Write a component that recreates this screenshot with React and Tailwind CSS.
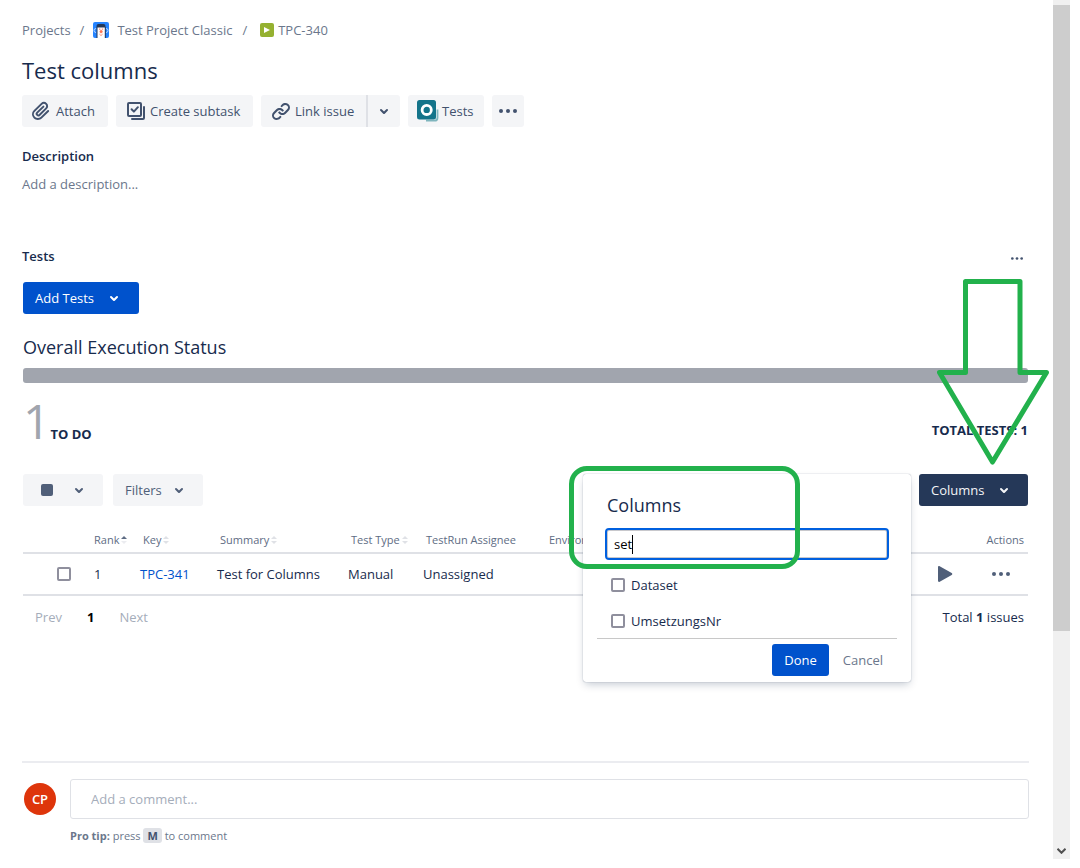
import React, { useState } from 'react';

function Chevron({ className = '' }) {
  return (
    <svg viewBox="0 0 24 24" className={`h-6 w-6 shrink-0 ${className}`} fill="currentColor" aria-hidden="true">
      <path d="M8.292 10.293a1.009 1.009 0 000 1.419l2.939 2.965c.218.215.5.322.779.322s.556-.107.769-.322l2.93-2.955a1.01 1.01 0 000-1.419.987.987 0 00-1.406 0l-2.298 2.317-2.307-2.327a.99.99 0 00-1.406 0z" />
    </svg>
  );
}

function AttachIcon() {
  return (
    <svg viewBox="0 0 24 24" className="h-6 w-6 shrink-0" fill="currentColor" aria-hidden="true">
      <path d="M11.643 17.965c-1.53 1.495-4.016 1.496-5.542.004a3.773 3.773 0 01.002-5.412l7.147-6.985a2.316 2.316 0 013.233-.003c.893.873.895 2.282.004 3.153l-6.703 6.55a.653.653 0 01-.914-.008.62.62 0 010-.902l6.229-6.087a.941.941 0 000-1.353.995.995 0 00-1.384 0l-6.23 6.087a2.502 2.502 0 000 3.607 2.643 2.643 0 003.683.009l6.703-6.55a4.074 4.074 0 00-.003-5.859 4.306 4.306 0 00-6.002.003l-7.148 6.985a5.655 5.655 0 00-.001 8.118c2.29 2.237 6.015 2.238 8.304.001l6.84-6.684a.942.942 0 000-1.353.995.995 0 00-1.384 0l-6.834 6.68z" />
    </svg>
  );
}

function SubtaskIcon() {
  return (
    <svg viewBox="0 0 24 24" className="h-6 w-6 shrink-0" fill="none" stroke="currentColor" strokeWidth="2" strokeLinecap="round" strokeLinejoin="round" aria-hidden="true">
      <rect x="4" y="4" width="13" height="13" rx="1" />
      <path d="M7.6 10.2l2.3 2.4 4-4.4" />
      <path d="M8 20h11a1 1 0 001-1V8" />
    </svg>
  );
}

function LinkIcon() {
  return (
    <svg viewBox="0 0 24 24" className="h-6 w-6 shrink-0" fill="currentColor" aria-hidden="true">
      <path d="M12.856 5.457l-.937.92a1.002 1.002 0 000 1.437 1.047 1.047 0 001.463 0l.984-.966c.967-.95 2.542-1.135 3.602-.288a2.54 2.54 0 01.203 3.81l-2.903 2.852a2.646 2.646 0 01-3.696 0l-1.11-1.09L9 13.57l1.108 1.089c1.822 1.788 4.802 1.788 6.622 0l2.905-2.852a4.558 4.558 0 00-.357-6.82c-1.893-1.517-4.695-1.226-6.422.47" />
      <path d="M11.144 19.543l.937-.92a1.002 1.002 0 000-1.437 1.047 1.047 0 00-1.462 0l-.985.966c-.967.95-2.542 1.135-3.602.288a2.54 2.54 0 01-.203-3.81l2.903-2.852a2.646 2.646 0 013.696 0l1.11 1.09L15 11.43l-1.108-1.089c-1.822-1.788-4.802-1.788-6.622 0l-2.905 2.852a4.558 4.558 0 00.357 6.82c1.893 1.517 4.695 1.226 6.422-.47" />
    </svg>
  );
}

function TestsIcon() {
  return (
    <svg viewBox="0 0 22 22" className="h-[22px] w-[22px] shrink-0" aria-hidden="true">
      <path d="M9 20.7h8.500a3 3 0 003-3V9.500" fill="none" stroke="#7fb5bd" strokeWidth="1.800" />
      <rect width="19" height="19.500" rx="2.500" fill="#14748a" />
      <circle cx="9.700" cy="9.900" r="4.600" fill="none" stroke="#fff" strokeWidth="2.800" />
    </svg>
  );
}

function ProjectAvatar() {
  return (
    <svg viewBox="0 0 16 16" className="h-4 w-4 shrink-0" aria-hidden="true">
      <rect width="16" height="16" rx="2" fill="#2684ff" />
      <path d="M3 6.500a2 2 0 000 4M13 6.500a2 2 0 010 4" fill="none" stroke="#b3d4ff" strokeWidth="1" />
      <path d="M4 5h8v11H4z" fill="#fff" />
      <path d="M3.500 5.500V4a2 2 0 012-2h5a2 2 0 012 2v1.500z" fill="#253858" />
      <path d="M4 5v11M12.300 5v11" stroke="#253858" strokeWidth="1" />
      <path d="M6 7.200h1.500M8.700 7.200h1.500" stroke="#ff8f73" strokeWidth="1.200" />
      <circle cx="8.100" cy="9.500" r="1.500" fill="#ff7452" />
      <path d="M6 12.200h4M7 13.500h2" stroke="#ffbdad" strokeWidth="1" />
    </svg>
  );
}

function Dots({ className = '' }) {
  return (
    <svg viewBox="0 0 18 4" className={className} fill="currentColor" aria-hidden="true">
      <circle cx="2" cy="2" r="2" />
      <circle cx="9" cy="2" r="2" />
      <circle cx="16" cy="2" r="2" />
    </svg>
  );
}

function SortArrows({ ascending = false }) {
  return (
    <svg viewBox="0 0 6 8" className="h-2 w-[6px] shrink-0" aria-hidden="true">
      <path d="M0 3L3 0l3 3z" fill={ascending ? '#5e6c84' : '#dfe1e6'} />
      <path d="M0 5h6L3 8z" fill={ascending ? '#ebecf0' : '#dfe1e6'} />
    </svg>
  );
}

function Checkbox({ label, showLabel = true }) {
  return (
    <label className="flex items-center gap-[6px] text-[13px] leading-5">
      <input
        type="checkbox"
        aria-label={label}
        className="h-[14px] w-[14px] shrink-0 appearance-none rounded-[2px] border-2 border-[#8f8f9d] bg-white checked:bg-[#0052cc]"
      />
      {showLabel && <span>{label}</span>}
    </label>
  );
}

function Heading({ children, sortable, ascending }) {
  return (
    <th className="whitespace-nowrap border-b-2 border-[#dfe1e6] pb-1 pl-[7px] pt-[26px] text-left font-medium">
      <span className="flex items-center gap-[2px] leading-4">
        {children}
        {sortable && <SortArrows ascending={ascending} />}
      </span>
    </th>
  );
}

const toolButton = 'flex h-8 items-center rounded-[3px] bg-[#f4f5f7] text-[#42526e]';
const cell = 'h-[42px] whitespace-nowrap border-b-2 border-[#dfe1e6] px-1';

function ColumnsDialog() {
  const [query, setQuery] = useState('set');
  return (
    <div
      role="dialog"
      aria-label="Columns"
      className="absolute right-full top-0 z-10 mr-2 w-[328px] rounded-[3px] bg-white px-[14px] pb-[6px] pt-[21px] text-[#172b4d] shadow-[0_0_1px_rgba(9,30,66,0.5),0_4px_8px_-2px_rgba(9,30,66,0.25)]"
    >
      <h2 className="pl-[10px] text-[18px] leading-5">Columns</h2>
      <div className="relative mx-2 mt-[13px]">
        <input
          type="text"
          aria-label="Search columns"
          value={query}
          onChange={(e) => setQuery(e.target.value)}
          className="block h-8 w-full rounded-[4px] border-2 border-[#0060df] bg-white px-[7px] text-[13px] text-black shadow-[inset_0_0_0_1px_#c8c8cc] outline-none"
        />
        <span className="absolute left-[27px] top-[7px] h-[19px] w-px bg-black" />
      </div>
      <div className="mt-[15px] flex flex-col gap-4 pl-[14px]">
        <Checkbox label="Dataset" />
        <Checkbox label="UmsetzungsNr" />
      </div>
      <div className="mt-[7px] flex justify-end border-t border-[#c8c8c8] pt-[5px]">
        <button type="button" className="h-8 rounded-[3px] bg-[#0052cc] px-3 text-[13px] text-white">Done</button>
        <button type="button" className="h-8 px-[14px] text-[13px] text-[#6b778c]">Cancel</button>
      </div>
      <div className="pointer-events-none absolute left-[-14px] top-[-8px] h-[103px] w-[231px] rounded-[18px] border-[5px] border-[#22b14c]" />
    </div>
  );
}

function TestsTable() {
  return (
    <table className="w-full table-fixed border-separate border-spacing-0 text-[13px] text-[#172b4d]">
      <colgroup>
        <col className="w-[64px]" />
        <col className="w-[49px]" />
        <col className="w-[77px]" />
        <col className="w-[131px]" />
        <col className="w-[75px]" />
        <col className="w-[123px]" />
        <col />
        <col className="w-[108px]" />
      </colgroup>
      <thead className="text-[11px] text-[#5e6c84]">
        <tr>
          <Heading />
          <Heading sortable ascending>Rank</Heading>
          <Heading sortable>Key</Heading>
          <Heading sortable>Summary</Heading>
          <Heading sortable>Test Type</Heading>
          <Heading>TestRun Assignee</Heading>
          <Heading>Environments</Heading>
          <th className="border-b-2 border-[#dfe1e6] pb-1 pr-1 pt-[26px] text-right font-medium leading-4">Actions</th>
        </tr>
      </thead>
      <tbody>
        <tr>
          <td className="h-[42px] border-b-2 border-[#dfe1e6] pl-[34px]"><Checkbox label="Select TPC-341" showLabel={false} /></td>
          <td className="h-[42px] border-b-2 border-[#dfe1e6] pl-[7px]">1</td>
          <td className={cell}><a href="#TPC-341" className="text-[#0052cc]">TPC-341</a></td>
          <td className={cell}>Test for Columns</td>
          <td className={cell}>Manual</td>
          <td className={cell}>Unassigned</td>
          <td className={cell} />
          <td className={cell}>
            <div className="flex items-center justify-end gap-[39px] pr-[14px] text-[#505f79]">
              <button type="button" aria-label="Run">
                <svg viewBox="0 0 15 16" className="h-4 w-[15px]" fill="currentColor" aria-hidden="true">
                  <path d="M0 1.200C0 .2.900-.2 1.700.3l12 6.700c.8.500.8 1.500 0 2l-12 6.700c-.8.500-1.700.1-1.700-.9z" />
                </svg>
              </button>
              <button type="button" aria-label="More actions"><Dots className="h-1 w-[18px]" /></button>
            </div>
          </td>
        </tr>
      </tbody>
    </table>
  );
}

export default function App() {
  return (
    <div className="flex bg-white pb-[9px] pr-[10px] font-['Open_Sans','Noto_Sans',sans-serif] text-[13px] leading-5 text-[#172b4d]">
      <main className="min-w-0 flex-1 pb-[13px] pl-[22px] pr-6 pt-5">
        <nav aria-label="Breadcrumb" className="flex h-5 items-center text-[#6b778c]">
          <a href="#projects">Projects</a>
          <span className="px-[9px]">/</span>
          <a href="#project" className="flex items-center gap-2"><ProjectAvatar />Test Project Classic</a>
          <span className="pl-[10px] pr-[13px]">/</span>
          <a href="#issue" className="flex items-center gap-1">
            <svg viewBox="0 0 14 14" className="h-[14px] w-[14px]" aria-hidden="true">
              <rect width="14" height="14" rx="2" fill="#95b131" />
              <path d="M4 4v6l6-3z" fill="#fff" />
            </svg>
            TPC-340
          </a>
        </nav>
        <h1 className="mt-4 text-[22px] leading-7">Test columns</h1>

        <div className="mt-[11px] flex gap-2">
          <button type="button" className={`${toolButton} w-[86px] gap-[3px] pl-[7px]`}><AttachIcon />Attach</button>
          <button type="button" className={`${toolButton} w-[137px] gap-[2px] whitespace-nowrap pl-2`}><SubtaskIcon />Create subtask</button>
          <div className="flex">
            <button type="button" className={`${toolButton} w-[105px] gap-[2px] whitespace-nowrap rounded-r-none pl-2`}><LinkIcon />Link issue</button>
            <button type="button" aria-label="More link options" className={`${toolButton} w-[34px] justify-center rounded-l-none border-l-2 border-[#dfe1e6]`}><Chevron /></button>
          </div>
          <button type="button" className={`${toolButton} w-[76px] gap-[3px] pl-[9px]`}><TestsIcon />Tests</button>
          <button type="button" aria-label="More" className={`${toolButton} w-8 justify-center`}><Dots className="h-1 w-[18px]" /></button>
        </div>

        <h2 className="mt-[19px] text-[13px] font-semibold leading-5">Description</h2>
        <p className="mt-2 text-[#6b778c]">Add a description...</p>

        <section className="mt-[52px]">
          <div className="flex h-5 items-center justify-between">
            <h2 className="text-[13px] font-semibold">Tests</h2>
            <button type="button" aria-label="Tests menu" className="pr-[6px] pt-1 text-[#42526e]"><Dots className="h-[3px] w-[12px]" /></button>
          </div>
          <div className="pl-px pr-px">
            <button type="button" className="mt-4 flex h-8 w-[116px] items-center rounded-[3px] bg-[#0052cc] pl-3 text-white">Add Tests<Chevron className="ml-2" /></button>
            <h2 className="mt-[19px] text-[18px] leading-7">Overall Execution Status</h2>
            <div className="mt-[7px] h-[15px] rounded-[3px] bg-[#a1a5ae]" />
            <div className="flex h-[91px] justify-between font-bold">
              <p className="flex items-baseline">
                <span className="text-[48px] font-normal leading-[75px] text-[#a1a5ae]">1</span>
                <span>TO DO</span>
              </p>
              <p className="pt-[37px]">TOTAL TESTS: 1</p>
            </div>
            <div className="flex gap-[10px] text-[#505f79]">
              <button type="button" aria-label="Status" className="flex h-8 w-20 items-center rounded-[3px] bg-[#f4f5f7] pl-[18px]">
                <span className="h-3 w-3 rounded-[2px] bg-current" />
                <Chevron className="ml-[14px]" />
              </button>
              <button type="button" className="flex h-8 w-[90px] items-center rounded-[3px] bg-[#f4f5f7] pl-3">Filters<Chevron className="ml-[5px]" /></button>
              <div className="relative ml-auto">
                <button type="button" aria-expanded="true" className="flex h-8 w-[109px] items-center rounded-[3px] bg-[#253858] pl-3 text-[#f4f5f7]">Columns<Chevron className="ml-2" /></button>
                <ColumnsDialog />
                <svg viewBox="0 0 112 188" className="pointer-events-none absolute bottom-[41px] right-[-21px] z-20 h-[188px] w-[112px] max-w-none" fill="none" stroke="#22b14c" strokeWidth="5" strokeLinejoin="round" aria-hidden="true">
                  <path d="M28.500 4.500h54.500v91h26.500L55.500 185l-53-89.500h26z" />
                </svg>
              </div>
            </div>
            <TestsTable />
            <div className="mt-[11px] flex h-5 items-center text-[#a5adba]">
              <button type="button" className="pl-3">Prev</button>
              <button type="button" aria-current="page" className="px-[25px] font-bold text-black">1</button>
              <button type="button">Next</button>
              <p className="ml-auto pr-1 text-[#172b4d]">Total <b>1</b> issues</p>
            </div>
          </div>
        </section>

        <section className="mt-[134px] border-t-2 border-[#ebecf0] pt-4">
          <div className="flex items-center">
            <span className="ml-[2px] flex h-8 w-8 items-center justify-center rounded-full bg-[#de350b] text-[13px] font-semibold text-white">CP</span>
            <input
              type="text"
              aria-label="Add a comment"
              placeholder="Add a comment..."
              className="ml-[14px] h-10 min-w-0 flex-1 rounded-[3px] border border-[#dfe1e6] px-5 text-[13px] placeholder:text-[#a5adba]"
            />
          </div>
          <p className="ml-12 mt-[7px] text-[11px] leading-5 text-[#6b778c]">
            <b>Pro tip:</b> press <kbd className="rounded-[3px] bg-[#dfe1e6] px-1 font-['Open_Sans',sans-serif] font-bold text-[#42526e]">M</kbd> to comment
          </p>
        </section>
      </main>
      <div className="flex w-[17px] shrink-0 flex-col items-center bg-[#f0f0f0] pb-[5px] pt-[5px]">
        <div className="w-full flex-[626] bg-[#cdcdcd]" />
        <div className="flex-[217]" />
        <svg viewBox="0 0 9 6" className="h-[6px] w-[9px]" fill="none" stroke="#505050" strokeWidth="2" aria-hidden="true">
          <path d="M.5.800l4 4 4-4" />
        </svg>
      </div>
    </div>
  );
}
